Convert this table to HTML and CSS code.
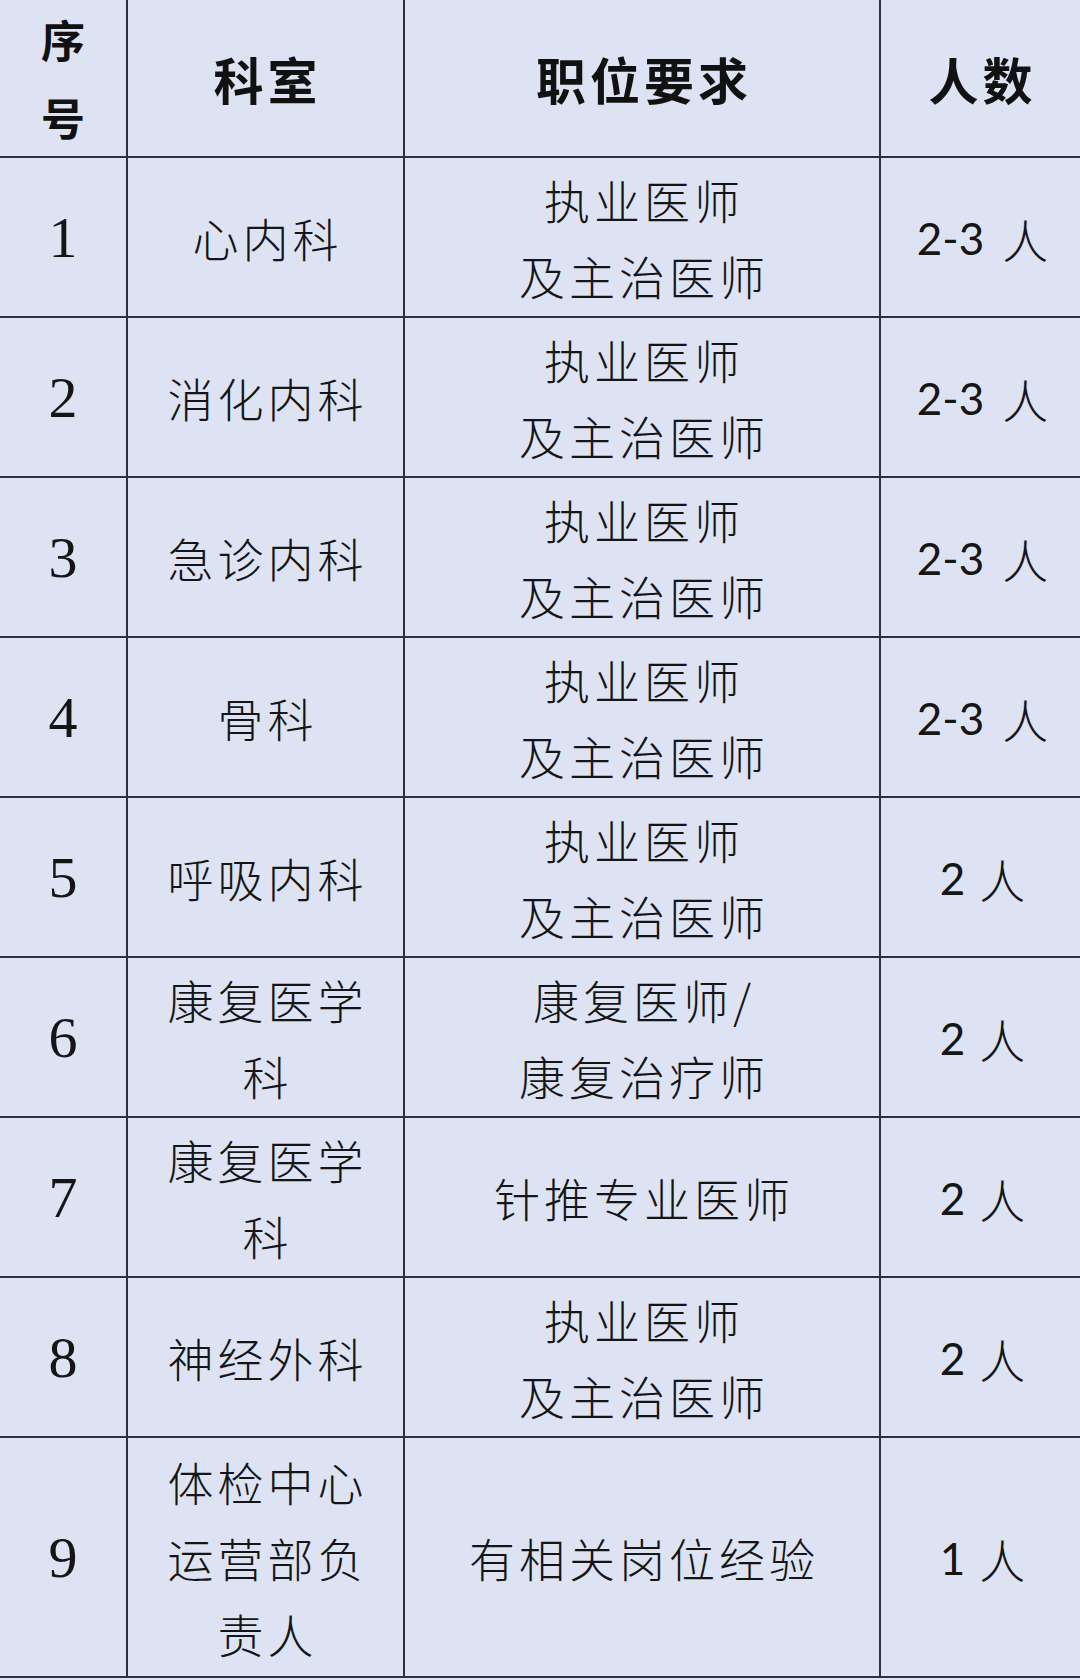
FILE: index.html
```html
<!DOCTYPE html>
<html lang="zh-CN">
<head>
<meta charset="utf-8">
<title>招聘岗位</title>
<link rel="stylesheet" href="styles.css">
</head>
<body>
<div class="table">
  <div class="row head">
    <div class="cell c1 hd small">序<br>号</div>
    <div class="cell c2 hd">科室</div>
    <div class="cell c3 hd">职位要求</div>
    <div class="cell c4 hd">人数</div>
  </div>
  <div class="row">
    <div class="cell c1 num">1</div>
    <div class="cell c2 cj">心内科</div>
    <div class="cell c3 cj">执业医师<br>及主治医师</div>
    <div class="cell c4 cnt"><span class="d">2-3</span><span class="p wide">人</span></div>
  </div>
  <div class="row">
    <div class="cell c1 num">2</div>
    <div class="cell c2 cj">消化内科</div>
    <div class="cell c3 cj">执业医师<br>及主治医师</div>
    <div class="cell c4 cnt"><span class="d">2-3</span><span class="p wide">人</span></div>
  </div>
  <div class="row">
    <div class="cell c1 num">3</div>
    <div class="cell c2 cj">急诊内科</div>
    <div class="cell c3 cj">执业医师<br>及主治医师</div>
    <div class="cell c4 cnt"><span class="d">2-3</span><span class="p wide">人</span></div>
  </div>
  <div class="row">
    <div class="cell c1 num">4</div>
    <div class="cell c2 cj">骨科</div>
    <div class="cell c3 cj">执业医师<br>及主治医师</div>
    <div class="cell c4 cnt"><span class="d">2-3</span><span class="p wide">人</span></div>
  </div>
  <div class="row">
    <div class="cell c1 num">5</div>
    <div class="cell c2 cj">呼吸内科</div>
    <div class="cell c3 cj">执业医师<br>及主治医师</div>
    <div class="cell c4 cnt"><span class="d">2</span><span class="p">人</span></div>
  </div>
  <div class="row">
    <div class="cell c1 num">6</div>
    <div class="cell c2 cj">康复医学<br>科</div>
    <div class="cell c3 cj">康复医师/<br>康复治疗师</div>
    <div class="cell c4 cnt"><span class="d">2</span><span class="p">人</span></div>
  </div>
  <div class="row">
    <div class="cell c1 num">7</div>
    <div class="cell c2 cj">康复医学<br>科</div>
    <div class="cell c3 cj">针推专业医师</div>
    <div class="cell c4 cnt"><span class="d">2</span><span class="p">人</span></div>
  </div>
  <div class="row">
    <div class="cell c1 num">8</div>
    <div class="cell c2 cj">神经外科</div>
    <div class="cell c3 cj">执业医师<br>及主治医师</div>
    <div class="cell c4 cnt"><span class="d">2</span><span class="p">人</span></div>
  </div>
  <div class="row tall">
    <div class="cell c1 num">9</div>
    <div class="cell c2 cj">体检中心<br>运营部负<br>责人</div>
    <div class="cell c3 cj">有相关岗位经验</div>
    <div class="cell c4 cnt"><span class="d">1</span><span class="p">人</span></div>
  </div>
</div>
</body>
</html>
```

FILE: styles.css
```css
html, body {
  margin: 0;
  padding: 0;
  background: #dde3f3;
}
body {
  width: 1080px;
  height: 1680px;
  overflow: hidden;
  color: #151515;
  font-family: "Noto Sans CJK SC", sans-serif;
}
.table {
  display: flex;
  flex-direction: column;
}
.row {
  display: grid;
  grid-template-columns: 128px 277px 476px 199px;
  height: 160px;
}
.row.head {
  height: 158px;
}
.row.tall {
  height: 240px;
}
.cell {
  display: flex;
  align-items: center;
  justify-content: center;
  text-align: center;
  border-bottom: 2px solid #2c313c;
  border-right: 2px solid #2c313c;
  box-sizing: border-box;
}
.cell.c4 {
  border-right: none;
}
.hd {
  font-weight: 700;
  font-size: 50px;
  letter-spacing: 4px;
  padding-left: 4px;
  line-height: 78px;
  color: #111;
}
.hd.small {
  font-size: 44px;
}
.cj {
  font-weight: 300;
  font-size: 46px;
  letter-spacing: 4px;
  padding-left: 4px;
  line-height: 76px;
}
.num {
  font-family: "Liberation Serif", serif;
  font-size: 58px;
  font-weight: 400;
}
.cnt {
  font-weight: 300;
  font-size: 46px;
  padding-top: 2px;
  padding-left: 4px;
}
.cnt .d {
  font-family: Lato, "Open Sans", sans-serif;
  font-weight: 400;
  font-size: 44px;
}
.cnt .p {
  margin-left: 14px;
}
.cnt .p.wide {
  margin-left: 18px;
}
```
